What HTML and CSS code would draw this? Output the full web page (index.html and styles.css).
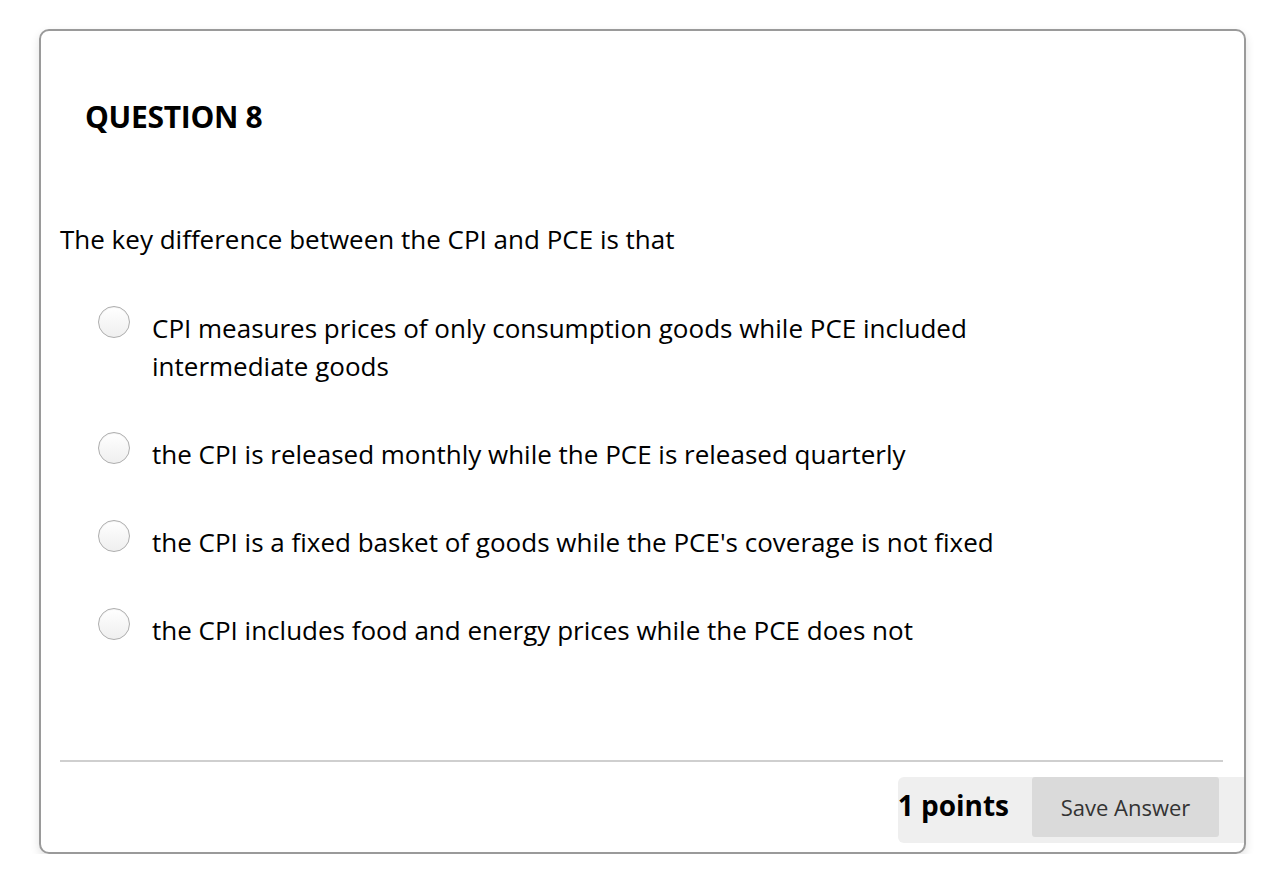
FILE: index.html
```html
<!DOCTYPE html>
<html>
<head>
<meta charset="utf-8">
<link rel="stylesheet" href="styles.css">
</head>
<body>
<div class="card">
  <h2 class="title">QUESTION 8</h2>
  <p class="question">The key difference between the CPI and PCE is that</p>
  <ul class="options">
    <li class="option"><span class="radio"></span><span class="label">CPI measures prices of only consumption goods while PCE included intermediate goods</span></li>
    <li class="option"><span class="radio"></span><span class="label">the CPI is released monthly while the PCE is released quarterly</span></li>
    <li class="option"><span class="radio"></span><span class="label">the CPI is a fixed basket of goods while the PCE's coverage is not fixed</span></li>
    <li class="option"><span class="radio"></span><span class="label">the CPI includes food and energy prices while the PCE does not</span></li>
  </ul>
  <div class="divider"></div>
  <div class="footer">
    <div class="bar">
      <span class="points">1 points</span>
      <button class="save">Save Answer</button>
    </div>
  </div>
</div>
</body>
</html>
```

FILE: styles.css
```css
html, body {
  margin: 0;
  padding: 0;
  background: #fff;
}
body {
  font-family: "Open Sans", "Liberation Sans", sans-serif;
  color: #000;
}
.card {
  box-sizing: border-box;
  margin: 29px 0 0 39px;
  width: 1207px;
  height: 825px;
  border: 2px solid #9a9a9a;
  border-radius: 10px;
  box-shadow: 0 4px 10px rgba(0,0,0,0.12);
  position: relative;
  overflow: hidden;
}
.title {
  margin: 0;
  padding: 66px 0 0 44px;
  font-size: 30px;
  font-weight: 700;
  line-height: 40px;
  letter-spacing: -0.3px;
}
.question {
  margin: 84px 0 0 19px;
  font-size: 26px;
  line-height: 36px;
}
.options {
  list-style: none;
  margin: 52px 0 0 0;
  padding: 0 0 0 57px;
}
.option {
  display: flex;
  align-items: flex-start;
  margin-bottom: 50px;
}
.radio {
  flex: none;
  box-sizing: border-box;
  width: 32px;
  height: 32px;
  border-radius: 50%;
  border: 1px solid #aeaeae;
  background: linear-gradient(#ffffff, #efefef);
  box-shadow: inset 0 1px 1px rgba(0,0,0,0.05);
  margin-top: -3px;
}
.label {
  margin-left: 22px;
  font-size: 26px;
  line-height: 38px;
  max-width: 900px;
}
.divider {
  position: absolute;
  left: 19px;
  right: 21px;
  top: 729px;
  height: 2px;
  background: #cfcfcf;
}
.footer {
  position: absolute;
  right: 0;
  bottom: 9px;
  display: flex;
  justify-content: flex-end;
}
.bar {
  display: flex;
  align-items: flex-start;
  background: #efefef;
  border-radius: 6px 0 0 6px;
  height: 66px;
  padding: 0 25px 0 0;
}
.points {
  font-size: 28px;
  font-weight: 700;
  line-height: 56px;
  padding: 0 23px 0 0;
  letter-spacing: 0;
}
.save {
  font-family: "Open Sans", "Liberation Sans", sans-serif;
  font-size: 22px;
  color: #333;
  background: #dadada;
  border: none;
  border-radius: 3px;
  width: 187px;
  height: 60px;
  padding: 0;
}
```
